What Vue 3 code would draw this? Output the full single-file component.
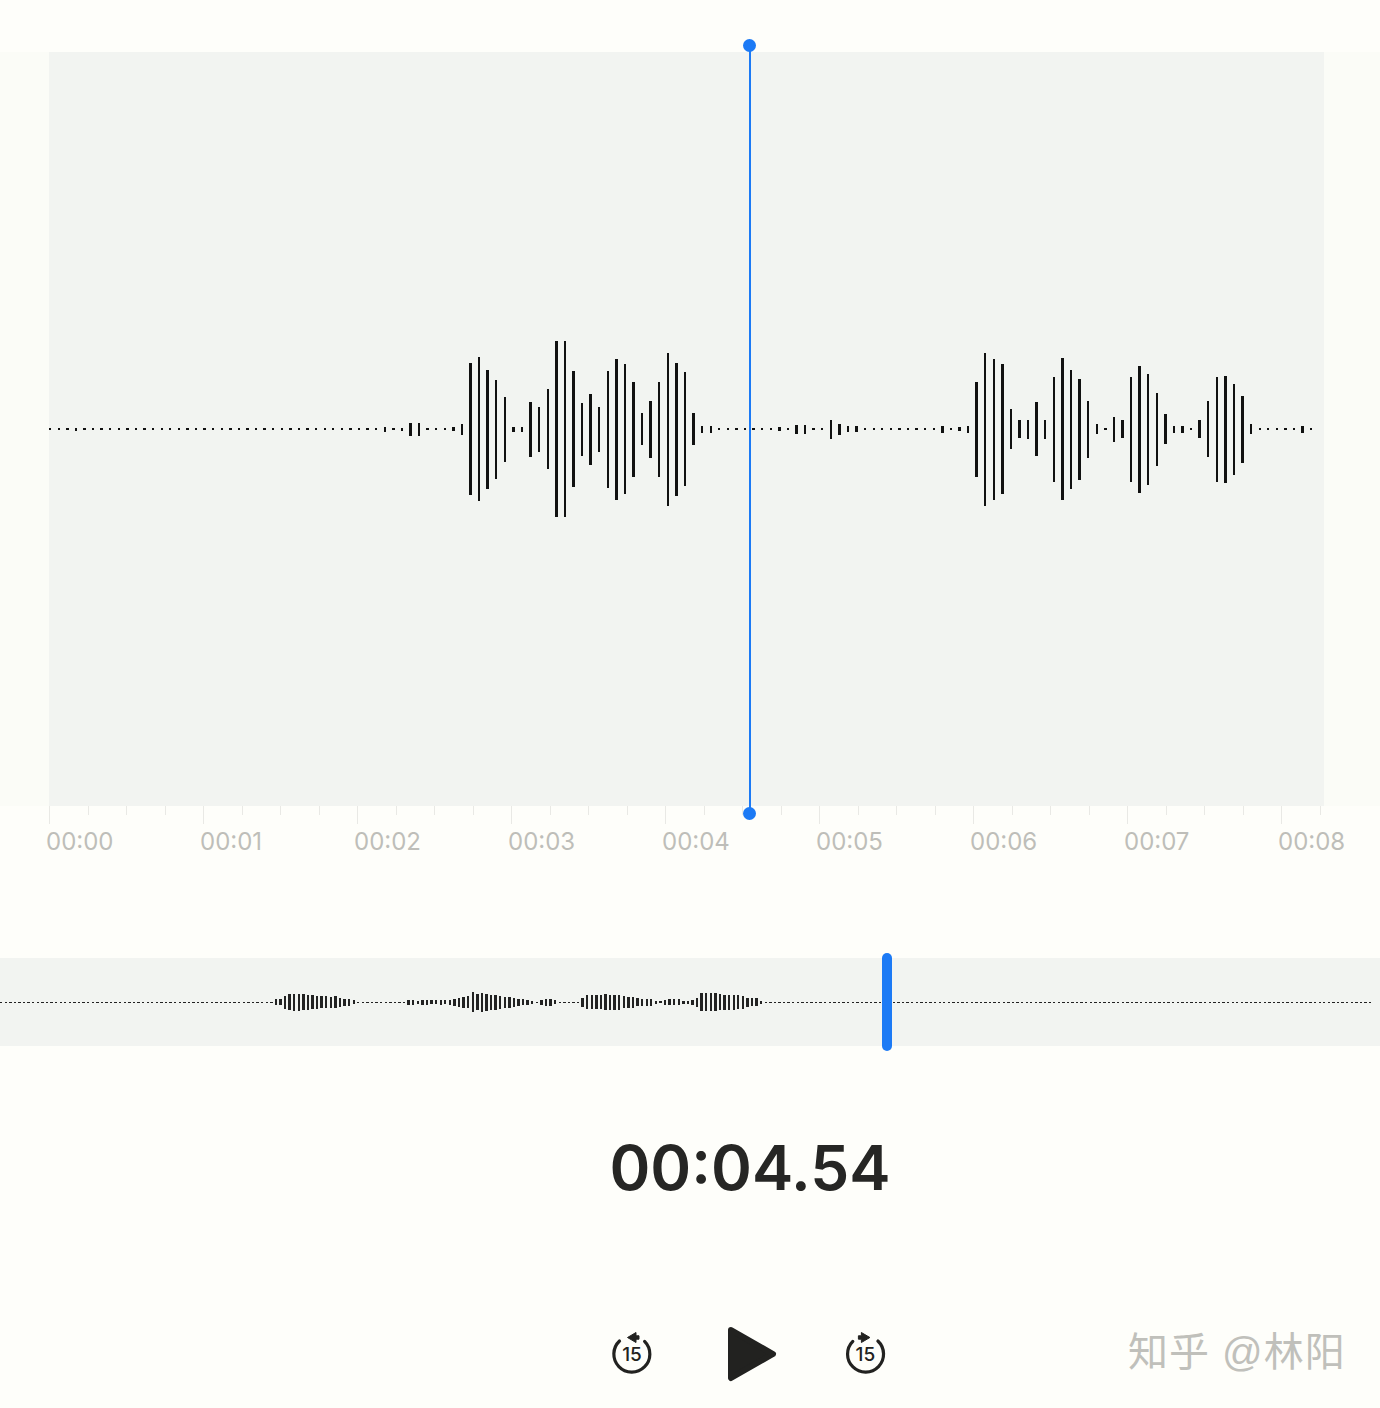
<script setup>
// big waveform: index -> bar height, anything not listed is a 2px dot
const bigHeights = {
  3: 3, 39: 5, 41: 3, 42: 13, 43: 13, 47: 4,
  48: 11, 49: 132, 50: 144, 51: 119, 52: 99, 53: 65, 54: 5, 55: 5, 56: 55, 57: 45,
  58: 80, 59: 176, 60: 176, 61: 116, 62: 53, 63: 71, 64: 45, 65: 117, 66: 141, 67: 130,
  68: 95, 69: 32, 70: 57, 71: 95, 72: 153, 73: 133, 74: 114, 75: 32, 76: 7, 77: 7,
  85: 4, 87: 9, 88: 9, 91: 19, 92: 11, 93: 6, 94: 6, 104: 7, 106: 4, 107: 7,
  108: 95, 109: 153, 110: 141, 111: 130, 112: 40, 113: 18, 114: 19, 115: 54, 116: 19,
  117: 105, 118: 142, 119: 119, 120: 101, 121: 57, 122: 10, 124: 25, 125: 18,
  126: 105, 127: 127, 128: 111, 129: 73, 130: 30, 131: 7, 132: 7, 134: 18, 135: 56,
  136: 105, 137: 107, 138: 91, 139: 67, 140: 10, 146: 7
}
const bigBars = Array.from({ length: 148 }, (_, i) => bigHeights[i] || 2)

// overview strip, one bar every 4.6px
const smallStart = {
  60: [6, 6, 13, 16, 17, 17, 16, 15, 14, 13, 12, 12, 11, 12, 9, 7, 7, 4],
  89: [5, 5, 3, 5, 5, 4, 4, 5, 4, 5, 7, 9, 11, 12, 20, 16, 19, 17, 15, 15, 13, 11, 11, 9, 7, 6, 5, 3],
  118: [5, 7, 7, 4],
  127: [9, 14, 14, 14, 14, 16, 15, 15, 15, 12, 11, 11, 8, 7, 7, 7, 3, 2, 5, 6, 6, 6, 3, 3, 5, 9,
    18, 18, 18, 18, 16, 15, 15, 15, 14, 13, 9, 8, 8, 3]
}
const smallHeights = {}
for (const start in smallStart) {
  smallStart[start].forEach((h, n) => {
    smallHeights[Number(start) + n] = h
  })
}
const smallBars = Array.from({ length: 300 }, (_, i) => smallHeights[i] || 1)

const ticks = Array.from({ length: 34 }, (_, i) => i)
const labels = ['00:00', '00:01', '00:02', '00:03', '00:04', '00:05', '00:06', '00:07', '00:08']
</script>

<template>
  <div class="page">
    <section class="stage">
      <div class="panel">
        <span v-for="(h, i) in bigBars" :key="i" class="bar" :style="{ height: h + 'px' }"></span>
      </div>
      <div class="playhead"></div>
    </section>

    <div class="ruler">
      <div class="ticks">
        <span v-for="t in ticks" :key="t" class="tick" :class="{ major: t % 4 === 0 }"></span>
      </div>
      <div class="labels">
        <span v-for="l in labels" :key="l" class="label">{{ l }}</span>
      </div>
    </div>

    <section class="overview">
      <span v-for="(h, i) in smallBars" :key="i" class="mini" :style="{ height: h + 'px' }"></span>
      <div class="handle"></div>
    </section>

    <div class="time">00:04.54</div>

    <div class="controls">
      <svg class="skip" width="44" height="50" viewBox="0 0 44 50">
        <path d="M34.6 12.4 A18 18 0 1 1 9.5 12" fill="none" stroke="#222220" stroke-width="3.2" stroke-linecap="round" />
        <path d="M17.5 8.5 L26 3.5 L26 6.8 L29 6.8 L29 10.2 L26 10.2 L26 13.5 Z" fill="#222220" stroke="#222220" stroke-width="1" stroke-linejoin="round" />
        <text x="22" y="32.3" text-anchor="middle" class="skip-num">15</text>
      </svg>
      <svg class="play" width="50" height="56" viewBox="0 0 50 56">
        <path d="M4 4 L46 28 L4 52 Z" fill="#222220" stroke="#222220" stroke-width="6" stroke-linejoin="round" />
      </svg>
      <svg class="skip" width="44" height="50" viewBox="0 0 44 50">
        <path d="M9.8 12.4 A18 18 0 1 0 34.9 12" fill="none" stroke="#222220" stroke-width="3.2" stroke-linecap="round" />
        <path d="M26.9 8.5 L18.4 3.5 L18.4 6.8 L15.4 6.8 L15.4 10.2 L18.4 10.2 L18.4 13.5 Z" fill="#222220" stroke="#222220" stroke-width="1" stroke-linejoin="round" />
        <text x="22.4" y="32.3" text-anchor="middle" class="skip-num">15</text>
      </svg>
    </div>

    <div class="watermark">知乎 @林阳</div>
  </div>
</template>

<style>
html,
body {
  margin: 0;
  background: #fefefa;
}
</style>

<style scoped>
.page {
  position: relative;
  width: 1380px;
  height: 1408px;
  overflow: hidden;
  background: #fefefa;
  font-family: Inter, "Liberation Sans", sans-serif;
}

.stage {
  position: relative;
  margin-top: 52px;
  height: 754px;
  padding: 0 56px 0 49px;
  background: #fbfcf7;
}

.panel {
  display: flex;
  align-items: center;
  gap: 6.2px;
  height: 100%;
  background: #f2f4f1;
}

.bar {
  flex: none;
  width: 2.4px;
  background: #111;
}

.playhead {
  position: absolute;
  left: 749px;
  top: -7px;
  bottom: -7px;
  width: 2px;
  background: #1c7af5;
}

.playhead::before,
.playhead::after {
  content: "";
  position: absolute;
  left: -6px;
  width: 13px;
  height: 13px;
  border-radius: 50%;
  background: #1c7af5;
}

.playhead::before {
  top: -6px;
}

.playhead::after {
  bottom: -7px;
}

.ruler {
  position: relative;
  height: 152px;
}

.ticks {
  display: flex;
  gap: 37.5px;
  padding-left: 49px;
  height: 18px;
}

.tick {
  flex: none;
  width: 1px;
  height: 9px;
  background: #e9e9e5;
}

.tick.major {
  height: 18px;
}

.labels {
  display: flex;
  padding-left: 46px;
  margin-top: 3px;
}

.label {
  flex: none;
  width: 154px;
  font-size: 24px;
  line-height: 30px;
  color: #bebeb9;
}

.overview {
  position: relative;
  display: flex;
  align-items: center;
  gap: 2.2px;
  height: 88px;
  background: #f2f4f1;
}

.mini {
  flex: none;
  width: 2.4px;
  background: #222;
}

.handle {
  position: absolute;
  left: 882px;
  top: -5px;
  width: 10px;
  height: 98px;
  border-radius: 5px;
  background: #1c7af5;
}

.time {
  width: 1380px;
  padding-left: 120px;
  box-sizing: border-box;
  margin-top: 84px;
  text-align: center;
  font-size: 62px;
  line-height: 76px;
  font-weight: 600;
  color: #262624;
}

.controls {
  display: flex;
  align-items: center;
  padding-left: 610px;
  margin-top: 120px;
}

.skip {
  flex: none;
}

.play {
  flex: none;
  margin: 0 66px 0 73px;
}

.skip-num {
  font-size: 19px;
  font-weight: 500;
  fill: #222220;
  font-family: Inter, "Liberation Sans", sans-serif;
}

.watermark {
  position: absolute;
  left: 1128px;
  top: 1328px;
  font-size: 40px;
  line-height: 48px;
  letter-spacing: 1px;
  white-space: nowrap;
  color: #c0c0bb;
  font-family: "Liberation Sans", "Noto Sans CJK SC", sans-serif;
}
</style>
